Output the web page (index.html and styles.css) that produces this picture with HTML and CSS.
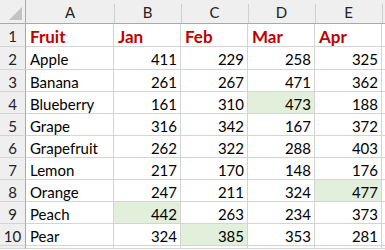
FILE: index.html
```html
<!DOCTYPE html>
<html>
<head>
<meta charset="utf-8">
<link rel="stylesheet" href="styles.css">
</head>
<body>
<div class="sheet">
  <div class="row head">
    <div class="rh corner"><span class="tri"></span></div>
    <div class="ch ca">A</div>
    <div class="ch cn">B</div>
    <div class="ch cn">C</div>
    <div class="ch cn">D</div>
    <div class="ch cn">E</div>
    <div class="ch cf"></div>
  </div>
  <div class="row r1">
    <div class="rh">1</div>
    <div class="c ca t">Fruit</div>
    <div class="c cn t">Jan</div>
    <div class="c cn t">Feb</div>
    <div class="c cn t">Mar</div>
    <div class="c cn t">Apr</div>
    <div class="c cf"></div>
  </div>
  <div class="row r2">
    <div class="rh">2</div>
    <div class="c ca">Apple</div>
    <div class="c cn n">411</div>
    <div class="c cn n">229</div>
    <div class="c cn n">258</div>
    <div class="c cn n">325</div>
    <div class="c cf"></div>
  </div>
  <div class="row">
    <div class="rh">3</div>
    <div class="c ca">Banana</div>
    <div class="c cn n">261</div>
    <div class="c cn n">267</div>
    <div class="c cn n">471</div>
    <div class="c cn n">362</div>
    <div class="c cf"></div>
  </div>
  <div class="row">
    <div class="rh">4</div>
    <div class="c ca">Blueberry</div>
    <div class="c cn n">161</div>
    <div class="c cn n">310</div>
    <div class="c cn n hi">473</div>
    <div class="c cn n">188</div>
    <div class="c cf"></div>
  </div>
  <div class="row">
    <div class="rh">5</div>
    <div class="c ca">Grape</div>
    <div class="c cn n">316</div>
    <div class="c cn n">342</div>
    <div class="c cn n">167</div>
    <div class="c cn n">372</div>
    <div class="c cf"></div>
  </div>
  <div class="row">
    <div class="rh">6</div>
    <div class="c ca">Grapefruit</div>
    <div class="c cn n">262</div>
    <div class="c cn n">322</div>
    <div class="c cn n">288</div>
    <div class="c cn n">403</div>
    <div class="c cf"></div>
  </div>
  <div class="row">
    <div class="rh">7</div>
    <div class="c ca">Lemon</div>
    <div class="c cn n">217</div>
    <div class="c cn n">170</div>
    <div class="c cn n">148</div>
    <div class="c cn n">176</div>
    <div class="c cf"></div>
  </div>
  <div class="row">
    <div class="rh">8</div>
    <div class="c ca">Orange</div>
    <div class="c cn n">247</div>
    <div class="c cn n">211</div>
    <div class="c cn n">324</div>
    <div class="c cn n hi">477</div>
    <div class="c cf"></div>
  </div>
  <div class="row">
    <div class="rh">9</div>
    <div class="c ca">Peach</div>
    <div class="c cn n hi">442</div>
    <div class="c cn n">263</div>
    <div class="c cn n">234</div>
    <div class="c cn n">373</div>
    <div class="c cf"></div>
  </div>
  <div class="row">
    <div class="rh">10</div>
    <div class="c ca">Pear</div>
    <div class="c cn n">324</div>
    <div class="c cn n hi">385</div>
    <div class="c cn n">353</div>
    <div class="c cn n">281</div>
    <div class="c cf"></div>
  </div>
  <div class="row tail">
    <div class="rh"></div>
    <div class="c ca"></div>
    <div class="c cn"></div>
    <div class="c cn"></div>
    <div class="c cn"></div>
    <div class="c cn"></div>
    <div class="c cf"></div>
  </div>
</div>
</body>
</html>
```
FILE: styles.css
```css
html, body {
  margin: 0;
  padding: 0;
  background: #ffffff;
  overflow: hidden;
}
.sheet {
  width: 385px;
  font-family: Lato, "Open Sans", sans-serif;
  font-size: 15px;
  color: #000000;
  overflow: hidden;
}
.row {
  display: flex;
  height: 22px;
}
.row.head {
  height: 24px;
  background: #efefef;
}
.row.r1 {
  height: 23px;
}
.row.r2 {
  height: 23px;
}
.row.tail {
  height: 3px;
}
.rh {
  width: 26px;
  flex: none;
  box-sizing: border-box;
  background: #efefef;
  border-right: 1px solid #a9a9a9;
  border-bottom: 1px solid #d4d4d4;
  display: flex;
  align-items: center;
  justify-content: center;
  color: #222222;
  padding-top: 2px;
}
.corner {
  position: relative;
  border-bottom: 1px solid #a9a9a9;
  padding-top: 0;
}
.tri {
  position: absolute;
  right: 3px;
  bottom: 3px;
  width: 0;
  height: 0;
  border-left: 13px solid transparent;
  border-bottom: 13px solid #c3c3c3;
}
.ch {
  flex: none;
  box-sizing: border-box;
  border-bottom: 1px solid #a9a9a9;
  display: flex;
  align-items: center;
  justify-content: center;
  color: #222222;
  position: relative;
  padding-top: 1px;
}
.ch::after {
  content: "";
  position: absolute;
  right: -1px;
  top: 4px;
  bottom: 0;
  width: 1px;
  background: #cfcfcf;
}
.ch.cf::after {
  display: none;
}
.c {
  flex: none;
  box-sizing: border-box;
  border-right: 1px solid #d4d4d4;
  border-bottom: 1px solid #d4d4d4;
  display: flex;
  align-items: center;
  padding: 2px 3px 0 4px;
  white-space: nowrap;
}
.ca { width: 88px; }
.cn { width: 67px; }
.cf { flex: 1 1 auto; min-width: 0; }
.n {
  justify-content: flex-end;
}
.t {
  color: #c00000;
  font-weight: 700;
  font-size: 17px;
}
.hi {
  background: #e2efda;
}
```
